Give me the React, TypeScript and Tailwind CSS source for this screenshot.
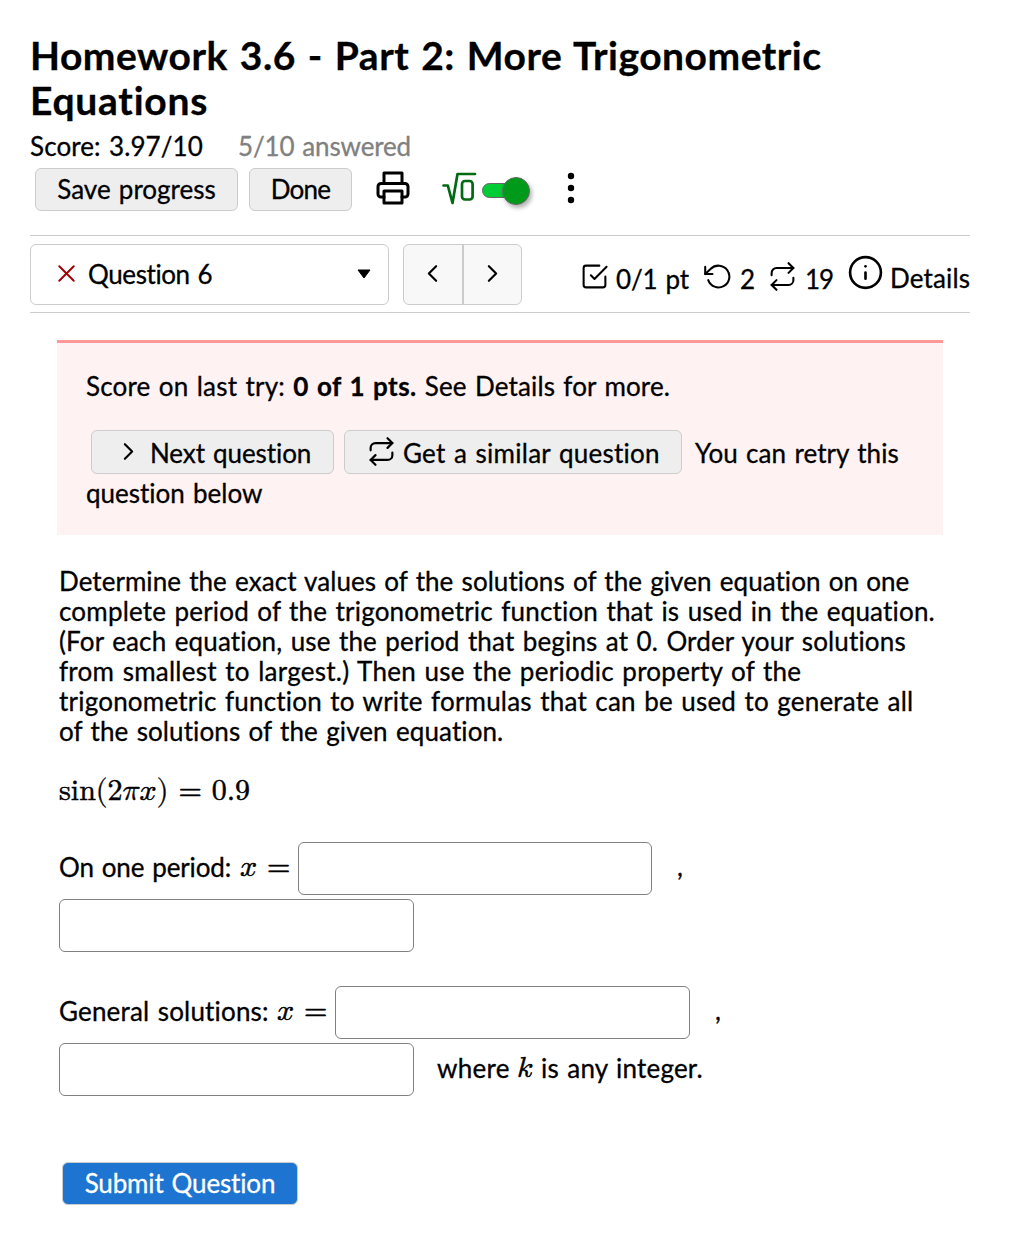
import { useState } from "react";
import { FiCheckSquare, FiChevronLeft, FiChevronRight, FiInfo, FiPrinter, FiRepeat, FiRotateCcw, FiX } from "react-icons/fi";

const mathFont = "font-['Latin_Modern_Math','Liberation_Serif',serif] text-[30px] [-webkit-text-stroke:0.5px] [word-spacing:0]";

const promptLines = [
    { text: "Determine the exact values of the solutions of the given equation on one", tracking: "tracking-[0.05px]" },
    { text: "complete period of the trigonometric function that is used in the equation.", tracking: "tracking-[0.19px]" },
    { text: "(For each equation, use the period that begins at 0. Order your solutions", tracking: "tracking-[0.16px]" },
    { text: "from smallest to largest.) Then use the periodic property of the", tracking: "tracking-[0.26px]" },
    { text: "trigonometric function to write formulas that can be used to generate all", tracking: "tracking-[0.21px]" },
    { text: "of the solutions of the given equation.", tracking: "tracking-[0.1px]" },
];

function AnswerBox({ className, label }: { className: string; label: string }) {
    const [value, setValue] = useState("");
    return (
        <input
            aria-label={label}
            value={value}
            onChange={(e) => setValue(e.target.value)}
            className={`h-[53px] shrink-0 rounded-md border border-[#808080] px-3 ${className}`}
        />
    );
}

function MathToggle() {
    const [enabled, setEnabled] = useState(true);
    return (
        <button onClick={() => setEnabled(!enabled)} className="ml-[30px] flex items-center">
            {/* Square root symbol */}
            <svg width="36" height="36" viewBox="0 0 36 36" fill="none" stroke="#006a12" strokeWidth="2.7">
                <path d="M2.5 13.5h4.3l4.7 17.5L16.5 2h17.5" strokeLinejoin="round" strokeLinecap="round" />
                <rect x="21" y="9" width="10.6" height="18.5" rx="3" />
            </svg>
            {/* Switch */}
            <span className="mt-[2px] ml-[5px] flex h-[28px] w-[48px] items-center">
                <span className="h-[15px] w-[35px] shrink-0 rounded-full border border-[#666] bg-[#00cc33]"></span>
                <span className="-ml-[15px] size-[28px] shrink-0 rounded-full border border-[#666] bg-[#009a1a] shadow-[2px_3px_4px_rgba(0,0,0,0.3)]"></span>
            </span>
        </button>
    );
}

export default function App() {
    return (
        <div className="min-h-[1243px] bg-white pt-[33px] pl-[30px] font-['Lato','Open_Sans',sans-serif] text-[26px] leading-[30px] whitespace-nowrap text-black [-webkit-text-stroke:0.3px] [font-variant-ligatures:none] [word-spacing:1.5px]">
            <div className="w-[940px]">
                {/* Header */}
                <h1 className="text-[39px] leading-[45px] font-bold tracking-[0.5px] [word-spacing:2px]">
                    Homework 3.6 - Part 2: More Trigonometric
                    <br />
                    <span className="tracking-[0.75px]">Equations</span>
                </h1>
                <div className="mt-2 flex">
                    <span className="w-[208px] tracking-[0.1px]">Score: 3.97/10</span>
                    <span className="tracking-[-0.16px] text-[#808080]">5/10 answered</span>
                </div>

                {/* Toolbar */}
                <div className="mt-[7px] flex h-[43px] items-center pl-[5px]">
                    <button className="flex h-[43px] w-[203px] items-center justify-center rounded-md border border-[#ccc] bg-[#eee] pb-px">
                        <span className="tracking-[0px] [word-spacing:1.5px]">Save progress</span>
                    </button>
                    <button className="ml-[11px] flex h-[43px] w-[103px] items-center justify-center rounded-md border border-[#ccc] bg-[#eee] pb-px">
                        <span className="tracking-[-0.8px]">Done</span>
                    </button>
                    <FiPrinter size={36} className="-mt-[3px] ml-[23px]" />
                    <MathToggle />
                    <svg width="8" height="32" viewBox="0 0 8 32" className="-mt-[4px] ml-[37px]">
                        <circle cx="4" cy="4" r="3.2" />
                        <circle cx="4" cy="16" r="3.2" />
                        <circle cx="4" cy="28" r="3.2" />
                    </svg>
                </div>

                {/* Question navigation */}
                <div className="mt-6 flex h-[78px] items-center border-y border-[#ccc]">
                    <div className="flex h-[61px] w-[359px] shrink-0 items-center rounded-md border border-[#ccc] pl-[21px]">
                        <FiX size={29} strokeWidth={1.6} className="mb-[2px] text-[#a00000]" />
                        <span className="mb-px ml-[7px] tracking-[-0.4px]">Question 6</span>
                        <svg width="14" height="10" viewBox="0 0 14 10" className="mr-[17px] ml-auto">
                            <path d="M1 1h12L7 9z" stroke="#000" strokeLinejoin="round" />
                        </svg>
                    </div>
                    <div className="ml-[14px] flex h-[61px] w-[119px] shrink-0 rounded-md border border-[#ccc] bg-[#f8f8f8]">
                        <button className="flex flex-1 items-center justify-center border-r-2 border-[#ccc] pb-[2px]">
                            <FiChevronLeft size={29} strokeWidth={1.8} />
                        </button>
                        <button className="flex flex-1 items-center justify-center pb-[2px]">
                            <FiChevronRight size={29} strokeWidth={1.8} />
                        </button>
                    </div>
                    <div className="ml-[58px] flex shrink-0 items-center pt-1">
                        <div className="flex w-[124px] items-center">
                            <FiCheckSquare size={29} strokeWidth={1.7} />
                            <span className="mt-[5px] ml-[7px] tracking-[-0.15px]">0/1 pt</span>
                        </div>
                        <div className="flex w-[64px] items-center">
                            <FiRotateCcw size={29} strokeWidth={1.7} />
                            <span className="mt-[5px] ml-[7px]">2</span>
                        </div>
                        <div className="flex w-[79px] items-center">
                            <FiRepeat size={29} strokeWidth={1.7} />
                            <span className="mt-[5px] ml-[8px] tracking-[-1.2px]">19</span>
                        </div>
                        <div className="flex items-center">
                            <FiInfo size={37} strokeWidth={1.7} className="mb-[7px]" />
                            <span className="mt-[3px] ml-[6px] tracking-[0.15px]">Details</span>
                        </div>
                    </div>
                </div>

                {/* Last try feedback */}
                <div className="mt-[27px] ml-[27px] h-[195px] w-[886px] border-t-3 border-[#ff9999] bg-[#fff2f2] pt-[28px] pl-[29px]">
                    <p>
                        <span className="tracking-[0.18px]">Score on last try: </span>
                        <b className="tracking-[0.4px]">0 of 1 pts. </b>
                        <span className="tracking-[0.14px]">See Details for more.</span>
                    </p>
                    <div className="mt-[29px] flex items-center pl-[5px]">
                        <button className="flex h-[44px] w-[243px] items-center rounded-md border border-[#ccc] bg-[#eee] pl-[22px]">
                            <FiChevronRight size={29} strokeWidth={1.8} className="mb-[2px]" />
                            <span className="mt-[2px] ml-[7px] tracking-[-0.08px] [word-spacing:1.5px]">Next question</span>
                        </button>
                        <button className="ml-[10px] flex h-[44px] w-[338px] items-center rounded-md border border-[#ccc] bg-[#eee] pl-[22px]">
                            <FiRepeat size={29} strokeWidth={1.8} className="mb-[2px]" />
                            <span className="mt-[2px] ml-[7px] tracking-[0.26px] [word-spacing:1.5px]">Get a similar question</span>
                        </button>
                        <span className="mt-[2px] ml-[13px] tracking-[0.08px]">You can retry this</span>
                    </div>
                    <p className="mt-[4px]">question below</p>
                </div>

                {/* Question */}
                <div className="mt-[31px] ml-[29px]">
                    {promptLines.map((line) => (
                        <p key={line.text} className={line.tracking}>{line.text}</p>
                    ))}
                    <p className={`mt-[30px] h-[30px] ${mathFont}`}>sin(2𝜋𝑥) = 0.9</p>

                    <div className="mt-[36px] flex h-[53px] items-center">
                        <span className="mb-[3px] w-[181px] tracking-[-0.15px]">On one period:</span>
                        <span className={`mb-[3px] w-[58px] ${mathFont}`}>𝑥 =</span>
                        <AnswerBox label="First solution" className="w-[354px]" />
                        <span className="mb-[5px] ml-[25px]">,</span>
                    </div>
                    <AnswerBox label="Second solution" className="mt-1 block w-[355px]" />

                    <div className="mt-[34px] flex h-[53px] items-center">
                        <span className="mb-[3px] w-[218px] tracking-[0.18px]">General solutions:</span>
                        <span className={`mb-[3px] w-[58px] ${mathFont}`}>𝑥 =</span>
                        <AnswerBox label="First general solution" className="w-[355px]" />
                        <span className="mb-[5px] ml-[25px]">,</span>
                    </div>
                    <div className="mt-1 flex h-[53px] items-center">
                        <AnswerBox label="Second general solution" className="mr-[23px] w-[355px]" />
                        <span className="mb-[3px] w-[80px] tracking-[0.3px]">where</span>
                        <span className={`mb-[3px] w-[24px] ${mathFont}`}>𝑘</span>
                        <span className="mb-[3px] tracking-[0.2px]">is any integer.</span>
                    </div>

                    <button className="mt-[66px] ml-[3px] flex h-[43px] w-[236px] items-center justify-center rounded-md border border-[#ccc] bg-[#1e74d1] pb-px text-white">
                        <span className="tracking-[-0.15px] [word-spacing:1.5px]">Submit Question</span>
                    </button>
                </div>
            </div>
        </div>
    );
}
